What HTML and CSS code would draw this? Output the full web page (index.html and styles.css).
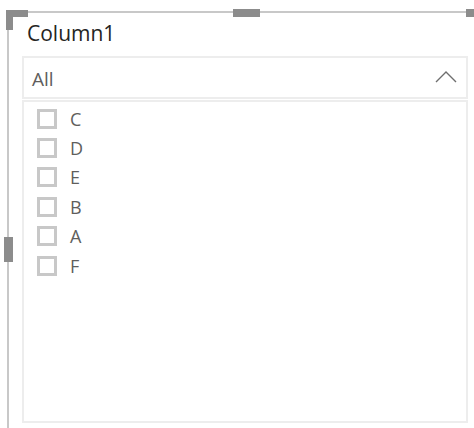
FILE: index.html
```html
<!DOCTYPE html>
<html lang="en">
<head>
<meta charset="utf-8">
<title>Slicer</title>
<link rel="stylesheet" href="styles.css">
</head>
<body>
<div class="visual">
  <span class="handle handle-corner-h"></span>
  <span class="handle handle-corner-v"></span>
  <span class="handle handle-top-mid"></span>
  <span class="handle handle-top-right"></span>
  <span class="handle handle-left-mid"></span>
  <div class="title">Column1</div>
  <div class="dropdown">
    <span class="dropdown-value">All</span>
    <svg class="chevron" width="22" height="12" viewBox="0 0 22 12"><polyline points="1,11 11,1 21,11" fill="none" stroke="#6e6e6e" stroke-width="1.4"/></svg>
  </div>
  <ul class="list">
    <li class="item"><span class="box"></span><span class="label">C</span></li>
    <li class="item"><span class="box"></span><span class="label">D</span></li>
    <li class="item"><span class="box"></span><span class="label">E</span></li>
    <li class="item"><span class="box"></span><span class="label">B</span></li>
    <li class="item"><span class="box"></span><span class="label">A</span></li>
    <li class="item"><span class="box"></span><span class="label">F</span></li>
  </ul>
</div>
</body>
</html>
```
FILE: styles.css
```css
html, body {
  margin: 0;
  padding: 0;
  background: #ffffff;
  overflow: hidden;
}
body {
  font-family: "Open Sans", "Noto Sans", sans-serif;
  width: 474px;
  height: 428px;
}
.visual {
  position: relative;
  margin: 11px 0 0 7px;
  height: 430px;
  border-top: 2px solid #c8c8c8;
  border-left: 2px solid #c8c8c8;
  padding: 0 6px 0 13px;
  box-sizing: border-box;
}
.handle {
  position: absolute;
  background: #8c8c8c;
}
.handle-corner-h { left: -3px; top: -3px; width: 22px; height: 7px; }
.handle-corner-v { left: -3px; top: -3px; width: 7px; height: 20px; }
.handle-top-mid { left: 224px; top: -4px; width: 27px; height: 8px; }
.handle-top-right { left: 457px; top: -4px; width: 10px; height: 8px; }
.handle-left-mid { left: -5px; top: 224px; width: 9px; height: 25px; }
.title {
  height: 43px;
  padding-left: 5px;
  font-size: 21px;
  line-height: 40px;
  color: #252423;
  box-sizing: border-box;
}
.dropdown {
  display: flex;
  align-items: center;
  justify-content: space-between;
  height: 43px;
  border: 2px solid #ededed;
  box-sizing: border-box;
  padding: 0 9px 0 8px;
}
.dropdown-value {
  font-size: 19px;
  color: #605e5c;
  line-height: 24px;
  margin-top: 3px;
}
.chevron {
  display: block;
  margin-top: -2px;
}
.list {
  list-style: none;
  margin: 1px 0 0 0;
  padding: 2px 0 0 13px;
  height: 323px;
  border: 2px solid #ededed;
  box-sizing: border-box;
}
.item {
  display: flex;
  align-items: center;
  height: 29.4px;
}
.box {
  width: 20px;
  height: 20px;
  border: 3px solid #c8c8c8;
  box-sizing: border-box;
  flex: none;
}
.label {
  margin-left: 13px;
  font-size: 18px;
  color: #605e5c;
  line-height: 20px;
}
```
